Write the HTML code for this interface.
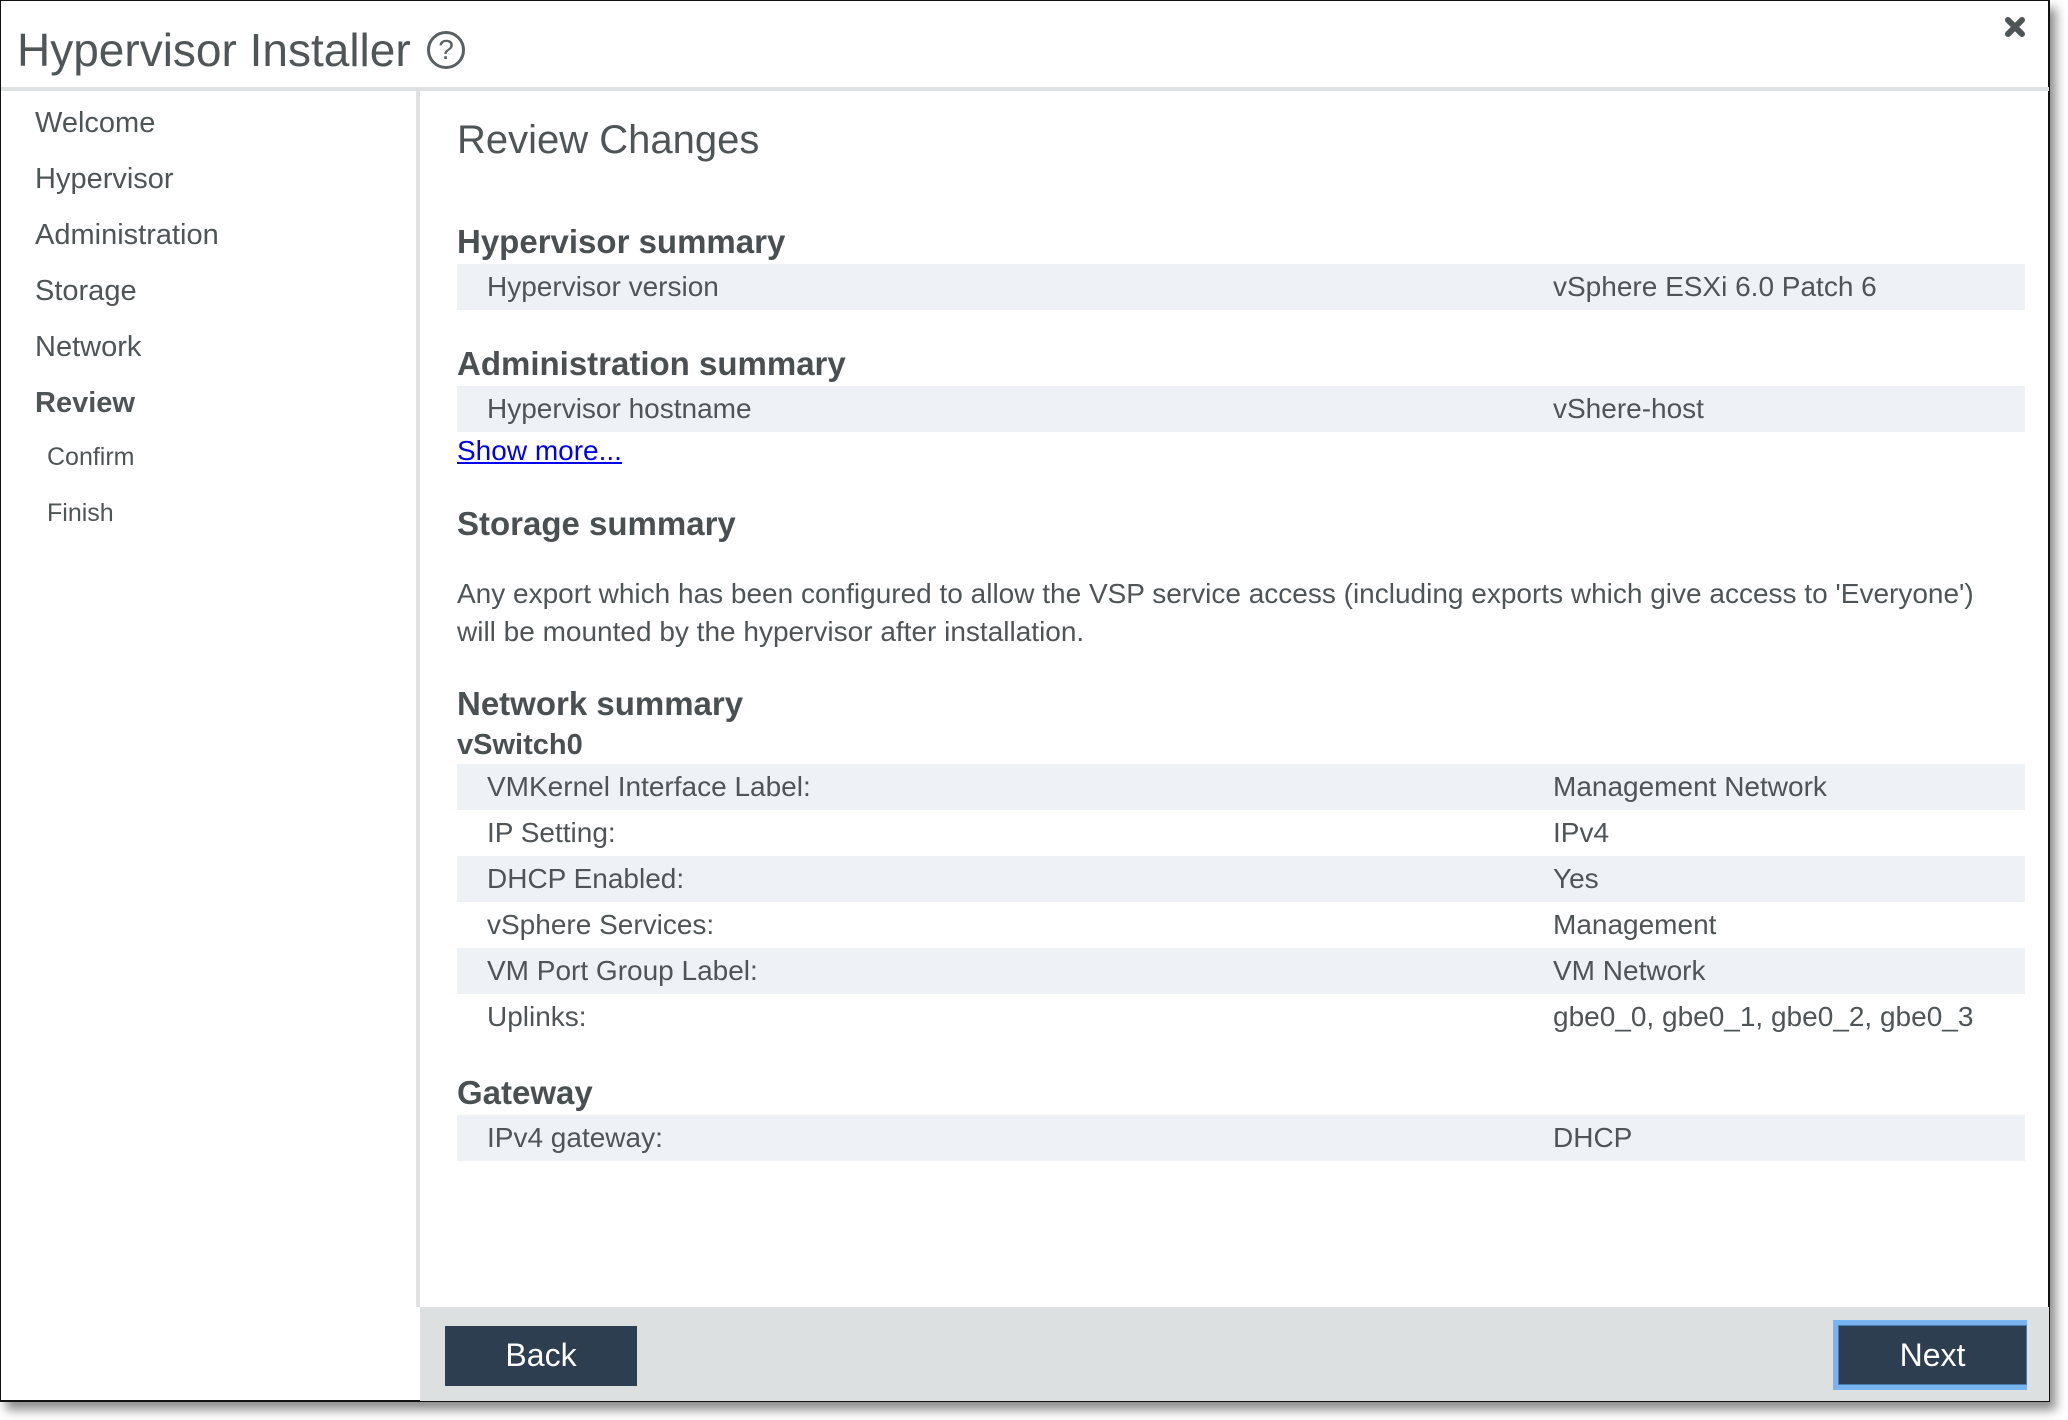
<!DOCTYPE html>
<html><head><meta charset="utf-8"><style>
*{margin:0;padding:0;box-sizing:border-box}
body{width:2068px;height:1420px;background:#fff;position:relative;overflow:hidden;font-family:"Liberation Sans",sans-serif;color:#4f5456}
.dlg{position:absolute;left:0;top:0;width:2050px;height:1402px;border:2px solid #111;border-left-width:1px;border-top-width:1px;background:#fff;box-shadow:6px 8px 10px rgba(0,0,0,.45)}
.a{position:absolute;white-space:nowrap}
.title{left:16px;top:22px;font-size:46px;color:#505557}
.help{left:426px;top:30px;width:38px;height:38px;border:3px solid #5a5f61;border-radius:50%;font-size:28px;text-align:center;line-height:32px;color:#5a5f61}
.sep{left:0;top:86px;width:2048px;height:4px;background:#dfe1e2}
.side{left:415px;top:90px;width:4px;height:1216px;background:#dfe1e2}
.nav{left:34px;font-size:29px}
.sub{left:46px;font-size:25px}
.h1{left:456px;top:117px;font-size:40px}
.h2{left:456px;font-size:33px;font-weight:bold;color:#4a4f52}
.row{position:absolute;left:456px;width:1568px;height:46px;font-size:28px;line-height:46px}
.row.g{background:#eef1f5}
.row span{position:absolute;left:30px}
.row b{position:absolute;left:1096px;font-weight:normal}
.p{left:456px;font-size:28px;line-height:38px;top:574px}
.foot{left:419px;top:1306px;width:1629px;height:94px;background:#dde0e0}
.btn{position:absolute;background:#2d3e50;color:#fff;font-size:32px;text-align:center;line-height:58px}
</style></head><body>
<div class="dlg">
<div class="a title">Hypervisor Installer</div>
<div class="a help">?</div>
<svg class="a" style="left:2003px;top:15px" width="22" height="22" viewBox="0 0 22 22"><path d="M4 4L18 18M18 4L4 18" stroke="#4f5456" stroke-width="6" stroke-linecap="round"/></svg>
<div class="a sep"></div>
<div class="a side"></div>
<div class="a nav" style="top:106px">Welcome</div>
<div class="a nav" style="top:162px">Hypervisor</div>
<div class="a nav" style="top:218px">Administration</div>
<div class="a nav" style="top:274px">Storage</div>
<div class="a nav" style="top:330px">Network</div>
<div class="a nav" style="top:386px;font-weight:bold">Review</div>
<div class="a sub" style="top:442px">Confirm</div>
<div class="a sub" style="top:498px">Finish</div>

<div class="a h1">Review Changes</div>
<div class="a h2" style="top:222px">Hypervisor summary</div>
<div class="row g" style="top:263px"><span>Hypervisor version</span><b>vSphere ESXi 6.0 Patch 6</b></div>
<div class="a h2" style="top:344px">Administration summary</div>
<div class="row g" style="top:385px"><span>Hypervisor hostname</span><b>vShere-host</b></div>
<div class="a" style="left:456px;top:434px;font-size:28px;color:#0000ee;text-decoration:underline">Show more...</div>
<div class="a h2" style="top:504px">Storage summary</div>
<div class="a p">Any export which has been configured to allow the VSP service access (including exports which give access to 'Everyone')<br>will be mounted by the hypervisor after installation.</div>
<div class="a h2" style="top:684px">Network summary</div>
<div class="a" style="left:456px;top:728px;font-size:29px;font-weight:bold;color:#4a4f52">vSwitch0</div>
<div class="row g" style="top:763px"><span>VMKernel Interface Label:</span><b>Management Network</b></div>
<div class="row" style="top:809px"><span>IP Setting:</span><b>IPv4</b></div>
<div class="row g" style="top:855px"><span>DHCP Enabled:</span><b>Yes</b></div>
<div class="row" style="top:901px"><span>vSphere Services:</span><b>Management</b></div>
<div class="row g" style="top:947px"><span>VM Port Group Label:</span><b>VM Network</b></div>
<div class="row" style="top:993px"><span>Uplinks:</span><b>gbe0_0, gbe0_1, gbe0_2, gbe0_3</b></div>
<div class="a h2" style="top:1073px">Gateway</div>
<div class="row g" style="top:1114px"><span>IPv4 gateway:</span><b>DHCP</b></div>

<div class="a foot"></div>
<div class="btn" style="left:444px;top:1325px;width:192px;height:60px">Back</div>
<div class="btn" style="left:1832px;top:1319px;width:194px;height:70px;border:5px solid #7ab4ee;border-right:none;line-height:60px;box-shadow:inset 0 0 0 1px #4a7bb0">Next</div>
</div>
</body></html>
